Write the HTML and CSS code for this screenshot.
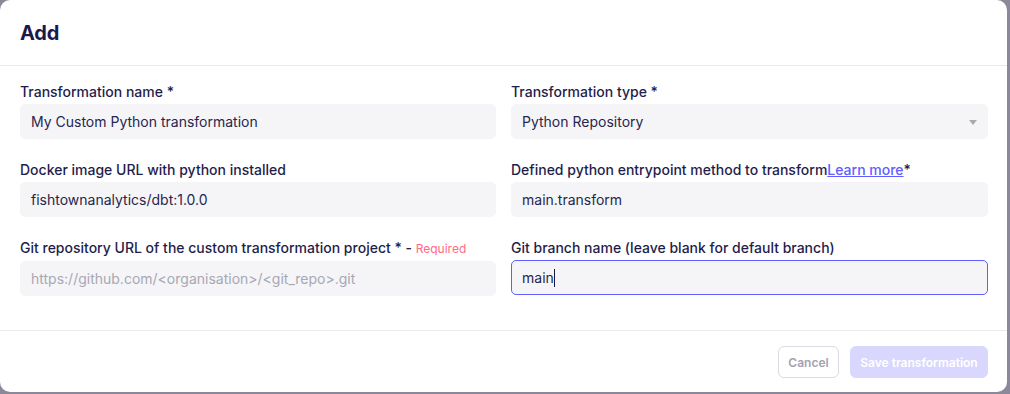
FILE: index.html
```html
<!DOCTYPE html>
<html lang="en">
<head>
<meta charset="utf-8">
<title>Add</title>
<link rel="stylesheet" href="styles.css">
</head>
<body>
<div class="dialog">
  <div class="dialog-header">
    <h1 class="title">Add</h1>
  </div>
  <div class="dialog-body">
    <div class="field">
      <label class="label">Transformation name *</label>
      <div class="input">My Custom Python transformation</div>
    </div>
    <div class="field">
      <label class="label">Transformation type *</label>
      <div class="input select">Python Repository<span class="caret"></span></div>
    </div>
    <div class="field">
      <label class="label">Docker image URL with python installed</label>
      <div class="input">fishtownanalytics/dbt:1.0.0</div>
    </div>
    <div class="field">
      <label class="label">Defined python entrypoint method to transform<a class="link" href="#">Learn more</a>*</label>
      <div class="input">main.transform</div>
    </div>
    <div class="field">
      <label class="label">Git repository URL of the custom transformation project * - <span class="required">Required</span></label>
      <div class="input placeholder">https://github.com/&lt;organisation&gt;/&lt;git_repo&gt;.git</div>
    </div>
    <div class="field">
      <label class="label">Git branch name (leave blank for default branch)</label>
      <div class="input focused">main<span class="cursor"></span></div>
    </div>
  </div>
  <div class="dialog-footer">
    <button class="btn btn-cancel">Cancel</button>
    <button class="btn btn-save">Save transformation</button>
  </div>
</div>
</body>
</html>
```

FILE: styles.css
```css
html, body {
  margin: 0;
  padding: 0;
}
body {
  width: 1010px;
  height: 394px;
  background: #8b889b;
  font-family: Inter, "Liberation Sans", sans-serif;
  overflow: hidden;
}
.dialog {
  width: 1007px;
  height: 392px;
  background: #ffffff;
  border-radius: 10px;
  display: flex;
  flex-direction: column;
  box-sizing: border-box;
}
.dialog-header {
  height: 66px;
  box-sizing: border-box;
  padding: 0 20px;
  display: flex;
  align-items: center;
  border-bottom: 1px solid #e8e8ed;
}
.title {
  margin: 0;
  font-size: 20px;
  font-weight: 700;
  color: #1a194d;
  letter-spacing: -0.2px;
}
.dialog-body {
  flex: 1;
  padding: 17px 19px 0 20px;
  display: grid;
  grid-template-columns: 476px 477px;
  column-gap: 15px;
  row-gap: 22px;
  align-content: start;
}
.field {
  display: flex;
  flex-direction: column;
}
.label {
  font-size: 14px;
  font-weight: 500;
  color: #1f1e4b;
  line-height: 17px;
  margin-bottom: 4px;
  white-space: nowrap;
}
.link {
  color: #615eff;
  text-decoration: underline;
}
.required {
  color: #ff6a85;
  font-size: 12px;
  font-weight: 400;
}
.input {
  height: 35px;
  box-sizing: border-box;
  background: #f5f5f8;
  border: 1px solid #f5f5f8;
  border-radius: 5px;
  padding: 0 10px;
  display: flex;
  align-items: center;
  font-size: 14px;
  color: #27264d;
  position: relative;
}
.placeholder {
  color: #a8a7b4;
}
.focused {
  border-color: #615eff;
}
.cursor {
  display: inline-block;
  width: 1px;
  height: 18px;
  background: #1a194d;
}
.caret {
  position: absolute;
  right: 10px;
  top: 15px;
  width: 0;
  height: 0;
  border-left: 4.5px solid transparent;
  border-right: 4.5px solid transparent;
  border-top: 5px solid #a9a9b0;
}
.dialog-footer {
  height: 62px;
  box-sizing: border-box;
  border-top: 1px solid #e8e8ed;
  padding: 15px 19px 0 20px;
  display: flex;
  justify-content: flex-end;
  align-items: flex-start;
  gap: 11px;
}
.btn {
  height: 32px;
  box-sizing: border-box;
  border-radius: 6px;
  font-family: Inter, "Liberation Sans", sans-serif;
  font-size: 12px;
  font-weight: 600;
  padding: 0;
  white-space: nowrap;
  cursor: default;
}
.btn-cancel {
  width: 61px;
  background: #ffffff;
  border: 1px solid #dcdbe3;
  color: #a3a2b1;
}
.btn-save {
  width: 138px;
  background: #d9d7fd;
  border: 1px solid #d9d7fd;
  color: #ffffff;
}
```
